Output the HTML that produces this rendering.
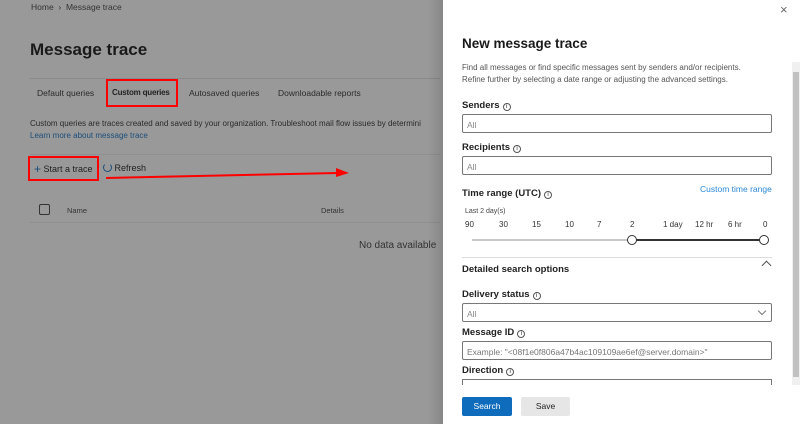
<!DOCTYPE html>
<html><head><style>
*{box-sizing:border-box;margin:0;padding:0}
body{width:800px;height:424px;overflow:hidden;background:#999;font-family:"Liberation Sans",sans-serif;position:relative;color:#1a1a1a}
.a{position:absolute;white-space:nowrap}
.shadow{position:absolute;left:428px;top:0;width:15px;height:424px;background:linear-gradient(to right,rgba(0,0,0,0),rgba(0,0,0,0.12))}
.panel{position:absolute;left:443px;top:0;width:357px;height:424px;background:#fff}
.lbl{font-size:9.5px;font-weight:bold;color:#222}
.info{display:inline-block;width:8px;height:8px;border:1px solid #555;border-radius:50%;margin-left:3px;vertical-align:0;font-size:6px;line-height:6px;text-align:center;font-weight:normal}
.inp{position:absolute;left:19px;width:310px;height:19px;border:1px solid #777;border-radius:2px;font-size:8.5px;color:#888;padding:5px 4px}
.red{position:absolute;border:2px solid #f00}
</style></head><body>
<div class="a" style="left:31px;top:2px;font-size:8.5px;color:#333">Home&nbsp;&nbsp;›&nbsp;&nbsp;Message trace</div>
<div class="a" style="left:30px;top:40px;font-size:17px;font-weight:bold;color:#1a1a1a">Message trace</div>
<div class="a" style="left:30px;top:78px;width:410px;height:1px;background:#8a8a8a"></div>
<div class="a" style="left:37px;top:88px;font-size:8.5px;color:#2a2a2a">Default queries</div>
<div class="a" style="left:112px;top:88px;font-size:8px;font-weight:bold;color:#222;letter-spacing:-0.2px">Custom queries</div>
<div class="a" style="left:189px;top:88px;font-size:8.5px;color:#2a2a2a">Autosaved queries</div>
<div class="a" style="left:278px;top:88px;font-size:8.5px;color:#2a2a2a">Downloadable reports</div>
<div class="red" style="left:106px;top:79px;width:72px;height:28px"></div>
<div class="a" style="left:30px;top:119px;font-size:8px;color:#2a2a2a">Custom queries are traces created and saved by your organization. Troubleshoot mail flow issues by determini</div>
<div class="a" style="left:30px;top:131px;font-size:8px;color:#1d4f7a">Learn more about message trace</div>
<div class="a" style="left:30px;top:154px;width:410px;height:1px;background:#8f8f8f"></div>
<div class="a" style="left:34px;top:162px;font-size:9px;color:#222"><span style="font-size:12px;font-weight:300;color:#1d4f7a;vertical-align:-1px">+</span> Start a trace</div>
<div class="red" style="left:28px;top:156px;width:71px;height:25px"></div>
<div class="a" style="left:103px;top:163px;font-size:9px;color:#222"><span style="display:inline-block;width:9px;height:9px;border:1.2px solid #1d4f7a;border-top-color:transparent;border-radius:50%;vertical-align:-1px"></span> Refresh</div>
<svg class="a" style="left:104px;top:165px" width="246" height="15"><line x1="2" y1="13" x2="234" y2="8" stroke="#f00" stroke-width="2"/><polygon points="232,3 245,8 232,12" fill="#f00"/></svg>
<div class="a" style="left:39px;top:204px;width:11px;height:11px;border:1px solid #333;border-radius:2px"></div>
<div class="a" style="left:67px;top:206px;font-size:7.5px;color:#333">Name</div>
<div class="a" style="left:321px;top:206px;font-size:7.5px;color:#333">Details</div>
<div class="a" style="left:30px;top:222px;width:410px;height:1px;background:#8f8f8f"></div>
<div class="a" style="left:359px;top:240px;font-size:10px;color:#333">No data available</div>
<div class="shadow"></div>
<div class="panel">
<div class="a" style="left:337px;top:2px;font-size:13px;color:#666">×</div>
<div class="a" style="left:19px;top:36px;font-size:13.5px;font-weight:bold;color:#1a1a1a">New message trace</div>
<div class="a" style="left:19px;top:62px;font-size:8px;color:#555;line-height:12px">Find all messages or find specific messages sent by senders and/or recipients.<br>Refine further by selecting a date range or adjusting the advanced settings.</div>
<div class="a lbl" style="left:19px;top:100px">Senders<span class="info">i</span></div>
<div class="inp" style="top:114px">All</div>
<div class="a lbl" style="left:19px;top:142px">Recipients<span class="info">i</span></div>
<div class="inp" style="top:156px">All</div>
<div class="a lbl" style="left:19px;top:188px">Time range (UTC)<span class="info">i</span></div>
<div class="a" style="left:257px;top:184px;font-size:8.5px;color:#2b88d8">Custom time range</div>
<div class="a" style="left:22px;top:208px;font-size:7px;color:#444">Last 2 day(s)</div>
<div class="a" style="left:0;top:220px;font-size:8px;color:#333;width:357px">
<span class="a" style="left:22px">90</span><span class="a" style="left:56px">30</span><span class="a" style="left:89px">15</span><span class="a" style="left:122px">10</span><span class="a" style="left:154px">7</span><span class="a" style="left:187px">2</span><span class="a" style="left:220px">1 day</span><span class="a" style="left:252px">12 hr</span><span class="a" style="left:285px">6 hr</span><span class="a" style="left:320px">0</span></div>
<div class="a" style="left:29px;top:239px;width:160px;height:2px;background:#c8c8c8"></div>
<div class="a" style="left:189px;top:239px;width:132px;height:2px;background:#333"></div>
<div class="a" style="left:184px;top:235px;width:10px;height:10px;border:1.5px solid #333;border-radius:50%;background:#fff"></div>
<div class="a" style="left:316px;top:235px;width:10px;height:10px;border:1.5px solid #333;border-radius:50%;background:#fff"></div>
<div class="a" style="left:19px;top:257px;width:310px;height:1px;background:#ddd"></div>
<div class="a lbl" style="left:19px;top:264px">Detailed search options</div>
<div class="a" style="left:320px;top:262px;width:7px;height:7px;border-left:1px solid #555;border-top:1px solid #555;transform:rotate(45deg)"></div>
<div class="a lbl" style="left:19px;top:289px">Delivery status<span class="info">i</span></div>
<div class="inp" style="top:303px">All<span style="position:absolute;right:6px;top:4px;width:6px;height:6px;border-right:1px solid #777;border-bottom:1px solid #777;transform:rotate(45deg)"></span></div>
<div class="a lbl" style="left:19px;top:327px">Message ID<span class="info">i</span></div>
<div class="inp" style="top:341px;color:#777">Example: "&lt;08f1e0f806a47b4ac109109ae6ef@server.domain&gt;"</div>
<div class="a lbl" style="left:19px;top:365px">Direction<span class="info">i</span></div>
<div class="a" style="left:19px;top:379px;width:310px;height:6px;border:1px solid #777;border-bottom:none"></div>
<div class="a" style="left:349px;top:62px;width:8px;height:323px;background:#f0f0f0"></div>
<div class="a" style="left:350px;top:72px;width:6px;height:305px;background:#c1c1c1"></div>
<div class="a" style="left:19px;top:397px;width:50px;height:19px;background:#0f6cbd;border-radius:2px;color:#fff;font-size:8.5px;text-align:center;line-height:19px">Search</div>
<div class="a" style="left:78px;top:397px;width:49px;height:19px;background:#e6e6e6;border-radius:2px;color:#222;font-size:8.5px;text-align:center;line-height:19px">Save</div>
</div>
</body></html>
